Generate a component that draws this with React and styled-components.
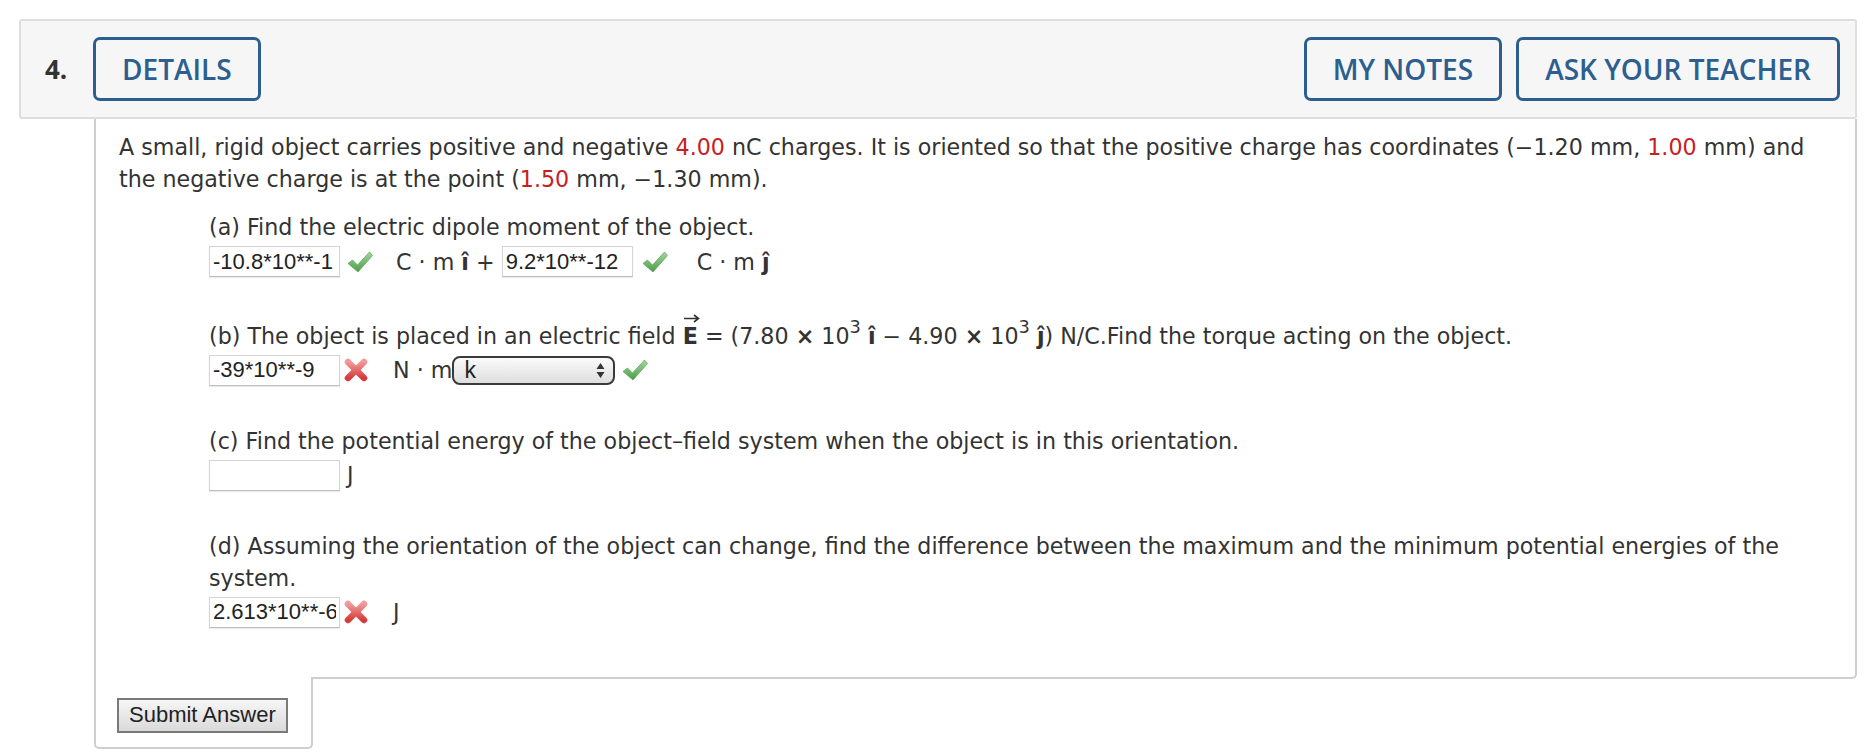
import React from 'react';
import styled, { createGlobalStyle } from 'styled-components';

const Global = createGlobalStyle`
  body {
    margin: 0;
    background: #fff;
  }
`;

const Page = styled.div`
  padding: 19px 16px 0 19px;
`;

const Header = styled.div`
  display: flex;
  align-items: center;
  height: 100px;
  box-sizing: border-box;
  background: #f6f6f6;
  border: 2px solid #dedede;
  border-radius: 3px;
  padding: 0 15px 0 24px;
`;

const Num = styled.span`
  width: 48px;
  font-family: "Open Sans", sans-serif;
  font-weight: 700;
  font-size: 26px;
  color: #333;
`;

const Spacer = styled.div`
  flex: 1;
`;

const HeaderButton = styled.button`
  height: 64px;
  box-sizing: border-box;
  padding: 0 26px;
  margin-left: ${(p) => p.$gap || 0}px;
  border: 3px solid #2c5f8f;
  border-radius: 7px;
  background: transparent;
  color: #2c5f8f;
  font-family: "Open Sans", sans-serif;
  font-weight: 600;
  font-size: 28px;
  cursor: pointer;
`;

const Card = styled.div`
  margin-left: 75px;
  border: 2px solid #cfcfcf;
  border-top: none;
  border-radius: 0 0 5px 0;
  padding: 12px 20px 46px 23px;
  font-family: "DejaVu Sans", Verdana, sans-serif;
  font-size: 22.2px;
  line-height: 32px;
  color: #333;
`;

const Red = styled.span`
  color: #c8201e;
`;

const Part = styled.div`
  margin: ${(p) => (p.$first ? 16 : 36)}px 0 0 90px;
`;

const Prompt = styled.div`
  padding-top: ${(p) => p.$extra || 0}px;
  sup {
    font-size: 0.8em;
    line-height: 0;
    vertical-align: 0.6em;
  }
`;

const Bold = styled.b`
  font-weight: 700;
`;

const Vec = styled.b`
  position: relative;
  display: inline-block;
  font-weight: 700;
  svg {
    position: absolute;
    left: 1px;
    top: -6px;
  }
`;

const Row = styled.div`
  display: flex;
  align-items: center;
  height: 37px;
`;

const Answer = styled.input`
  width: 131px;
  height: 31px;
  box-sizing: border-box;
  margin: 0;
  padding: 0 3px;
  border: 1px solid #d4d4d4;
  border-bottom-color: #bdbdbd;
  box-shadow: 0 1px 1px rgba(0, 0, 0, 0.08);
  background: #fff;
  font-family: "Liberation Sans", Arial, sans-serif;
  font-size: 22px;
  color: #222;
  outline: none;
`;

const Unit = styled.span`
  margin-left: ${(p) => p.$ml || 0}px;
  white-space: pre;
`;

const IconSlot = styled.span`
  display: inline-flex;
  margin-left: ${(p) => p.$ml ?? 6}px;
`;

const SelectBox = styled.div`
  display: flex;
  align-items: center;
  justify-content: space-between;
  width: 163px;
  height: 29px;
  box-sizing: border-box;
  padding: 0 8px 0 10px;
  border: 2px solid #3a3a3a;
  border-radius: 8px;
  background: linear-gradient(#fafafa, #dedede);
  font-family: "Liberation Sans", Arial, sans-serif;
  font-size: 23px;
  color: #222;
`;

const SubmitTab = styled.div`
  position: relative;
  margin: -2px 0 0 75px;
  width: 219px;
  height: 72px;
  box-sizing: border-box;
  border: 2px solid #cfcfcf;
  border-top: none;
  border-radius: 0 0 5px 5px;
  background: #fff;
  padding: 21px 0 0 21px;
`;

const SubmitButton = styled.button`
  height: 35px;
  padding: 0 10px;
  border: 2px solid #7a7a7a;
  background: linear-gradient(#f6f6f6, #dadada);
  font-family: "Liberation Sans", Arial, sans-serif;
  font-size: 22px;
  color: #222;
`;

function Check() {
  return (
    <svg width="28" height="24" viewBox="0 0 28 24">
      <defs>
        <linearGradient id="ck" x1="0" y1="0" x2="0" y2="1">
          <stop offset="0" stopColor="#a3d99d" />
          <stop offset="1" stopColor="#4c9a48" />
        </linearGradient>
      </defs>
      <path
        d="M2 13.5 L6.5 10 L11.5 15 L23.5 2 L26.5 5.5 L12 22 Z"
        fill="url(#ck)"
        stroke="#5ea95a"
        strokeWidth="0.8"
        strokeLinejoin="round"
      />
    </svg>
  );
}

function Cross() {
  return (
    <svg width="26" height="26" viewBox="0 0 26 26">
      <defs>
        <linearGradient id="cx" x1="0" y1="0" x2="0" y2="1">
          <stop offset="0" stopColor="#f29a9a" />
          <stop offset="1" stopColor="#d63b3b" />
        </linearGradient>
      </defs>
      <g stroke="url(#cx)" strokeWidth="6.5" strokeLinecap="round">
        <path d="M5 5 L21 21" />
        <path d="M21 5 L5 21" />
      </g>
    </svg>
  );
}

function Arrows() {
  return (
    <svg width="9" height="17" viewBox="0 0 9 17">
      <path d="M4.5 1 L8.5 7 L0.5 7 Z M4.5 16 L8.5 10 L0.5 10 Z" fill="#333" />
    </svg>
  );
}

function VecArrow() {
  return (
    <svg width="16" height="9" viewBox="0 0 16 9">
      <path d="M0 4.5 H14 M10 1 L14.5 4.5 L10 8" stroke="#333" strokeWidth="1.6" fill="none" />
    </svg>
  );
}

export default function App() {
  return (
    <Page>
      <Global />
      <Header>
        <Num>4.</Num>
        <HeaderButton>DETAILS</HeaderButton>
        <Spacer />
        <HeaderButton>MY NOTES</HeaderButton>
        <HeaderButton $gap={14}>ASK YOUR TEACHER</HeaderButton>
      </Header>

      <Card>
        <div>
          A small, rigid object carries positive and negative <Red>4.00</Red> nC charges. It is oriented so that the
          positive charge has coordinates (−1.20 mm, <Red>1.00</Red> mm) and the negative charge is at the point (
          <Red>1.50</Red> mm, −1.30 mm).
        </div>

        <Part $first>
          <Prompt>(a) Find the electric dipole moment of the object.</Prompt>
          <Row>
            <Answer readOnly value="-10.8*10**-1" />
            <IconSlot><Check /></IconSlot>
            <Unit $ml={22}>C · m <Bold>î</Bold> + </Unit>
            <Answer readOnly value="9.2*10**-12" />
            <IconSlot $ml={8}><Check /></IconSlot>
            <Unit $ml={28}>C · m <Bold>ĵ</Bold></Unit>
          </Row>
        </Part>

        <Part>
          <Prompt $extra={3.6}>
            (b) The object is placed in an electric field{' '}
            <Vec>
              <VecArrow />E
            </Vec>{' '}
            = (7.80 <Bold>×</Bold> 10<sup>3</sup> <Bold>î</Bold> − 4.90 <Bold>×</Bold> 10<sup>3</sup> <Bold>ĵ</Bold>)
            N/C.Find the torque acting on the object.
          </Prompt>
          <Row>
            <Answer readOnly value="-39*10**-9" />
            <IconSlot $ml={3}><Cross /></IconSlot>
            <Unit $ml={24}>N · m</Unit>
            <SelectBox>
              <span>k</span>
              <Arrows />
            </SelectBox>
            <IconSlot $ml={6}><Check /></IconSlot>
          </Row>
        </Part>

        <Part>
          <Prompt>(c) Find the potential energy of the object–field system when the object is in this orientation.</Prompt>
          <Row>
            <Answer readOnly value="" />
            <Unit $ml={7}>J</Unit>
          </Row>
        </Part>

        <Part>
          <Prompt>
            (d) Assuming the orientation of the object can change, find the difference between the maximum and the
            minimum potential energies of the system.
          </Prompt>
          <Row>
            <Answer readOnly value="2.613*10**-6" />
            <IconSlot $ml={3}><Cross /></IconSlot>
            <Unit $ml={24}>J</Unit>
          </Row>
        </Part>
      </Card>

      <SubmitTab>
        <SubmitButton>Submit Answer</SubmitButton>
      </SubmitTab>
    </Page>
  );
}
